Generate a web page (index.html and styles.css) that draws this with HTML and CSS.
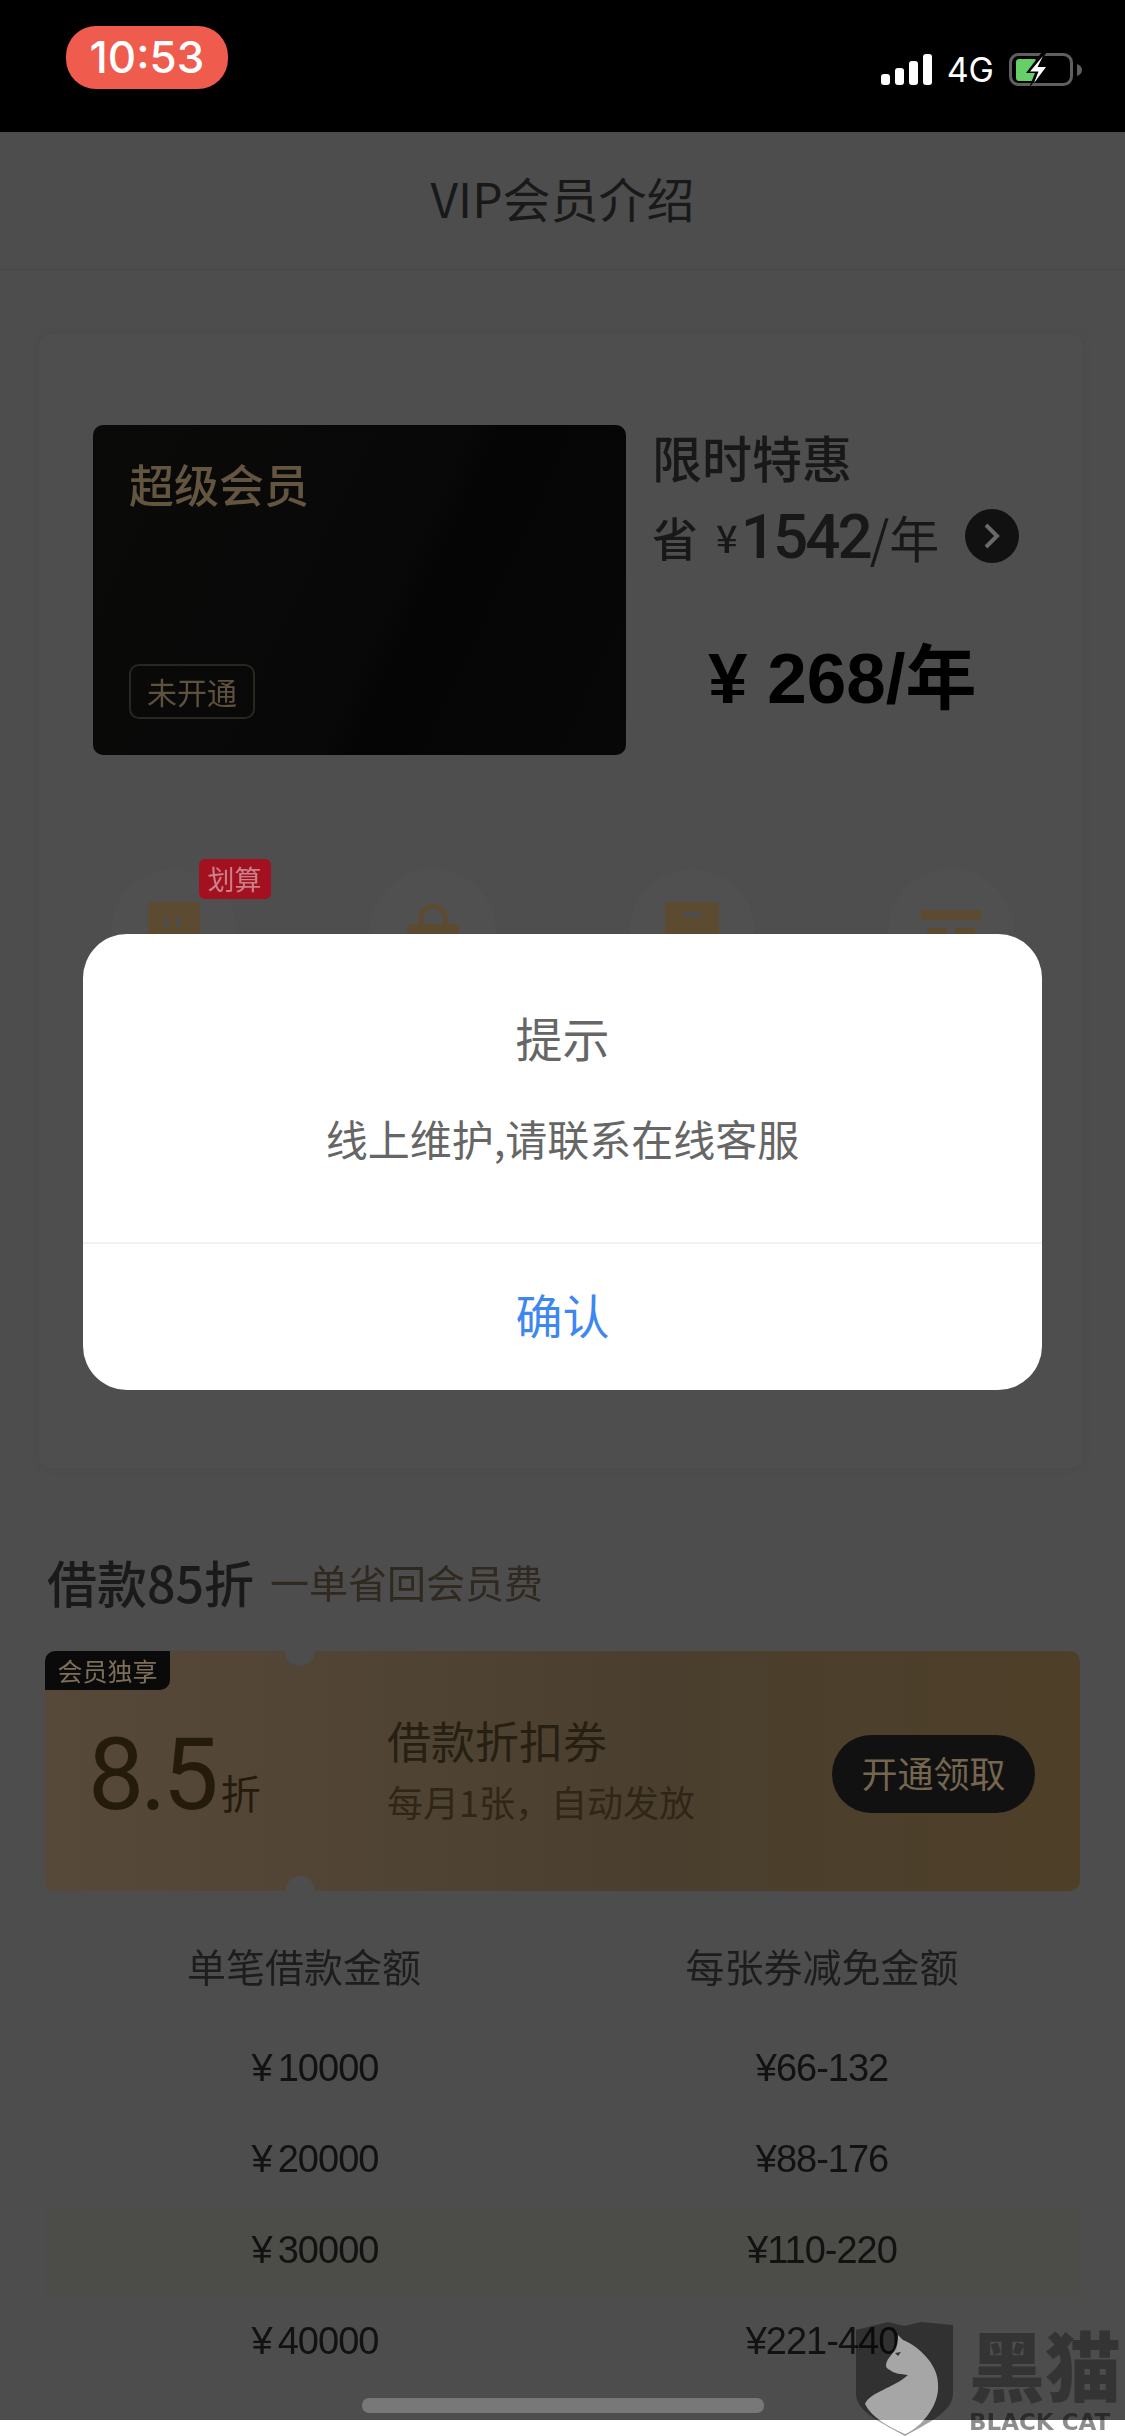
FILE: index.html
```html
<!DOCTYPE html>
<html lang="zh-CN">
<head>
  <meta charset="UTF-8" />
  <meta name="viewport" content="width=device-width, initial-scale=1" />
  <title>VIP会员介绍</title>
  <link rel="stylesheet" href="styles.css">
</head>
<body>
  <div class="phone">
    <div class="status">
      <div class="time">10:53</div>
      <div class="status-right">
        <svg class="signal" width="51" height="31" viewBox="0 0 51 31">
          <rect x="0" y="20" width="9" height="11" rx="3" fill="#fff"/>
          <rect x="14" y="14" width="9" height="17" rx="3" fill="#fff"/>
          <rect x="28" y="7" width="9" height="24" rx="3" fill="#fff"/>
          <rect x="42" y="0" width="9" height="31" rx="3" fill="#fff"/>
        </svg>
        <span class="net">4G</span>
        <svg class="battery" width="73" height="36" viewBox="0 0 73 36">
          <rect x="1.500" y="2.500" width="61" height="30" rx="8" fill="none" stroke="#5f5f5f" stroke-width="3"/>
          <rect x="7" y="7" width="21" height="22" rx="3" fill="#66cf67"/>
          <path d="M68 12c3 1 5 3 5 6s-2 5-5 6z" fill="#5f5f5f"/>
          <path d="M33 0L17 21h9l-6 15 18-23h-9l9-13z" fill="#000"/>
          <path d="M34 4L21 19.500h8.500L25 31l12-16h-8.500z" fill="#fff"/>
        </svg>
      </div>
    </div>

    <div class="page">
      <div class="nav">VIP会员介绍</div>

      <div class="vip-card">
        <div class="hero">
          <div class="black-card soft">
            <div class="black-card-title">超级会员</div>
            <div class="black-card-tag">未开通</div>
          </div>
          <div class="offer">
            <div class="offer-title soft">限时特惠</div>
            <div class="offer-save soft">
              <span>省</span>
              <span class="yen">¥</span>
              <span class="save-num">1542</span>
              <span class="per">/年</span>
              <span class="go">
                <svg width="20" height="28" viewBox="0 0 20 28"><path d="M4 3l11 11L4 25" fill="none" stroke="#6a6a6a" stroke-width="4"/></svg>
              </span>
            </div>
            <div class="offer-price">¥ 268/年</div>
          </div>
        </div>

        <div class="perks soft">
          <div class="perk">
            <span class="deal">划算</span>
            <svg width="52" height="70" viewBox="0 0 52 70"><rect width="52" height="70" rx="3" fill="#5c4b31"/><rect x="16" y="14" width="4" height="12" fill="#4d4d4d"/><rect x="28" y="14" width="4" height="12" fill="#4d4d4d"/></svg>
          </div>
          <div class="perk">
            <svg width="52" height="70" viewBox="0 0 52 70"><path d="M14 24v-8a12 12 0 0 1 24 0v8" fill="none" stroke="#5c4b31" stroke-width="5"/><rect y="22" width="52" height="48" rx="4" fill="#5c4b31"/></svg>
          </div>
          <div class="perk">
            <svg width="54" height="70" viewBox="0 0 54 70"><rect width="54" height="70" rx="3" fill="#5c4b31"/><rect x="18" y="10" width="18" height="5" rx="2" fill="#4d4d4d"/></svg>
          </div>
          <div class="perk">
            <svg class="perk-low" width="60" height="60" viewBox="0 0 60 60"><rect width="60" height="10" fill="#5c4b31"/><rect x="6" y="18" width="20" height="8" fill="#5c4b31"/><rect x="34" y="18" width="20" height="8" fill="#5c4b31"/><rect x="6" y="34" width="48" height="26" fill="#5c4b31"/></svg>
          </div>
        </div>
      </div>

      <div class="loan-head soft">
        <span class="loan-title">借款85折</span>
        <span class="loan-sub">一单省回会员费</span>
      </div>

      <div class="ticket soft">
        <span class="ticket-tag">会员独享</span>
        <div class="ticket-rate">
          <span class="rate-num">8.5</span>
          <span class="rate-unit">折</span>
        </div>
        <div class="ticket-info">
          <div class="ticket-name">借款折扣券</div>
          <div class="ticket-note">每月1张，自动发放</div>
        </div>
        <div class="ticket-btn">开通领取</div>
      </div>

      <div class="rates soft">
        <div class="rates-head">单笔借款金额</div>
        <div class="rates-head">每张券减免金额</div>
        <div class="rates-cell amount"><span class="amount-yen">¥</span>10000</div>
        <div class="rates-cell">¥66-132</div>
        <div class="rates-cell amount"><span class="amount-yen">¥</span>20000</div>
        <div class="rates-cell">¥88-176</div>
        <div class="rates-cell amount band"><span class="amount-yen">¥</span>30000</div>
        <div class="rates-cell band">¥110-220</div>
        <div class="rates-cell amount"><span class="amount-yen">¥</span>40000</div>
        <div class="rates-cell">¥221-440</div>
      </div>
    </div>

    <div class="home-bar"></div>

    <div class="modal">
      <div class="modal-body">
        <div class="modal-title">提示</div>
        <div class="modal-text">线上维护,请联系在线客服</div>
      </div>
      <div class="modal-ok">确认</div>
    </div>

    <div class="watermark">
      <svg class="shield" width="97" height="114" viewBox="0 0 97 114">
        <path fill-rule="evenodd" fill="rgba(0,0,0,.36)" d="M0 8L32 0 48 4 65 0 97 3V72C97 90 70 102 49 114 28 102 0 90 0 72Z M42 13L47 18C62 24 82 42 82 62 84 84 64 106 49 112 32 104 16 96 9 82 14 70 38 66 52 53 46 52 38 52 34 48 28 46 29 40 36 32 39 28 42 24 42 13Z"/>
        <path fill="rgba(255,255,255,.5)" d="M42 13L47 18C62 24 82 42 82 62 84 84 64 106 49 112 32 104 16 96 9 82 14 70 38 66 52 53 46 52 38 52 34 48 28 46 29 40 36 32 39 28 42 24 42 13Z"/>
        <path fill="#333" d="M39 31l6-1-3 4z"/>
      </svg>
      <div class="mark-text">
        <div class="mark-cn">黑猫</div>
        <div class="mark-en">BLACK CAT</div>
      </div>
    </div>
  </div>
</body>
</html>
```

FILE: styles.css
```css
* {
  box-sizing: border-box;
}
body {
  margin: 0;
  background: #fff;
  font-family: "Noto Sans CJK SC", "Noto Sans", sans-serif;
}
.phone {
  position: relative;
  width: 1125px;
  height: 2436px;
  overflow: hidden;
}
.soft {
  filter: blur(0.7px);
}

/* status bar */
.status {
  height: 132px;
  background: #000;
  display: flex;
  justify-content: space-between;
  align-items: flex-start;
  padding: 26px 43px 0 66px;
}
.time {
  width: 162px;
  height: 63px;
  border-radius: 30px;
  background: #ef5b4c;
  color: #fff;
  font-family: Inter, sans-serif;
  font-size: 44px;
  font-weight: 500;
  line-height: 63px;
  text-align: center;
}
.status-right {
  display: flex;
  align-items: center;
  margin-top: 27px;
  height: 33px;
}
.net {
  margin-left: 15px;
  margin-right: 15px;
  color: #fff;
  font-family: Inter, sans-serif;
  font-size: 34px;
  line-height: 33px;
}

/* page behind the dialog */
.page {
  height: 2288px;
  background: #4d4d4d;
}
.nav {
  height: 138px;
  border-bottom: 1px solid #464646;
  color: #191919;
  font-size: 48px;
  line-height: 130px;
  text-align: center;
}
.vip-card {
  width: 1044px;
  height: 1134px;
  margin: 64px 0 0 39px;
  padding-top: 91px;
  background: #4e4e4e;
  border-radius: 12px;
  box-shadow: 0 0 6px #4a4a4a;
}
.hero {
  display: flex;
  padding-left: 54px;
}
.black-card {
  width: 533px;
  height: 330px;
  padding: 29px 0 36px 36px;
  display: flex;
  flex-direction: column;
  align-items: flex-start;
  justify-content: space-between;
  background: linear-gradient(115deg, #0a0a09, #080808 55%, #050505 60%, #070707);
  border-radius: 10px;
}
.black-card-title {
  color: #645540;
  font-size: 45px;
  font-weight: 500;
  line-height: 60px;
}
.black-card-tag {
  width: 126px;
  height: 55px;
  border: 2px solid #2a2620;
  border-radius: 10px;
  color: #5f513e;
  font-size: 30px;
  line-height: 50px;
  text-align: center;
}
.offer {
  margin: -3px 0 0 26px;
  flex: 1;
}
.offer-title {
  color: #181818;
  font-size: 50px;
  font-weight: 500;
  line-height: 68px;
}
.offer-save {
  height: 92px;
  display: flex;
  align-items: center;
  color: #181818;
  font-size: 46px;
  font-weight: 500;
}
.yen {
  margin-left: 18px;
  font-size: 38px;
}
.save-num {
  margin-left: 3px;
  font-family: Roboto, sans-serif;
  font-size: 62px;
  letter-spacing: -3px;
}
.per {
  font-size: 50px;
  font-weight: 400;
}
.go {
  width: 54px;
  height: 54px;
  margin-left: 26px;
  display: flex;
  align-items: center;
  justify-content: center;
  border-radius: 50%;
  background: #111;
}
.offer-price {
  margin: 57px 0 0 56px;
  color: #000;
  font-family: "Liberation Sans", "Noto Sans CJK SC", sans-serif;
  font-size: 71px;
  line-height: 80px;
  font-weight: bold;
}
.perks {
  display: grid;
  grid-template-columns: repeat(4, 259px);
  margin: 114px 0 0 5px;
}
.perk {
  position: relative;
  width: 126px;
  height: 126px;
  margin: 0 auto;
  padding-top: 33px;
  display: flex;
  align-items: flex-start;
  justify-content: center;
  background: #505050;
  border-radius: 50%;
}
.perk-low {
  margin-top: 8px;
}
.deal {
  position: absolute;
  top: -10px;
  left: 88px;
  width: 72px;
  height: 40px;
  border-radius: 6px;
  background: #a3101f;
  color: #c9828a;
  font-size: 27px;
  line-height: 40px;
  text-align: center;
}

/* loan section */
.loan-head {
  display: flex;
  align-items: center;
  height: 60px;
  margin-top: 83px;
  padding-left: 47px;
}
.loan-title {
  color: #1a1a1a;
  font-size: 50px;
  font-weight: 500;
}
.loan-sub {
  margin-left: 16px;
  color: #302920;
  font-size: 39px;
}
.ticket {
  position: relative;
  width: 1035px;
  height: 240px;
  margin: 40px 0 0 45px;
  display: flex;
  align-items: center;
  background: linear-gradient(90deg, #57493a, #4a3f2e 60%, #4e3f28);
  border-radius: 10px;
}
.ticket::before,
.ticket::after {
  content: "";
  position: absolute;
  left: 240px;
  width: 30px;
  height: 30px;
  background: #4d4d4d;
  border-radius: 50%;
}
.ticket::before {
  top: -15px;
}
.ticket::after {
  bottom: -15px;
}
.ticket-tag {
  position: absolute;
  top: 0;
  left: 0;
  width: 125px;
  height: 39px;
  background: #0a0a0a;
  border-radius: 10px 0 10px 0;
  color: #7d6e59;
  font-size: 25px;
  line-height: 39px;
  text-align: center;
}
.ticket-rate {
  width: 342px;
  padding: 6px 0 0 43px;
  display: flex;
  align-items: baseline;
  color: #241b0b;
}
.rate-num {
  font-family: Roboto, sans-serif;
  font-size: 100px;
  letter-spacing: -4px;
}
.rate-unit {
  margin-left: 6px;
  font-size: 40px;
}
.ticket-info {
  flex: 1;
  margin-top: -4px;
}
.ticket-name {
  color: #271f11;
  font-size: 44px;
  line-height: 56px;
}
.ticket-note {
  margin-top: 8px;
  color: #2f2616;
  font-size: 36px;
  line-height: 50px;
}
.ticket-btn {
  width: 203px;
  height: 78px;
  margin: 6px 45px 0 0;
  background: #111;
  border-radius: 39px;
  color: #75664f;
  font-size: 36px;
  line-height: 74px;
  text-align: center;
}

/* rate table */
.rates {
  width: 1036px;
  margin-left: 45px;
  display: grid;
  grid-template-columns: 1fr 1fr;
}
.rates-head {
  height: 134px;
  padding-top: 37px;
  color: #1d1d1d;
  font-size: 39px;
  line-height: 74px;
  text-align: center;
}
.rates-cell {
  height: 91px;
  color: #121212;
  font-family: "Liberation Sans", sans-serif;
  font-size: 38px;
  letter-spacing: -1px;
  line-height: 87px;
  text-align: center;
}
.amount {
  padding-left: 22px;
}
.amount-yen {
  margin-right: 6px;
}
.band {
  background: #4c4c49;
}

/* things lying over the page */
.home-bar {
  position: absolute;
  top: 2398px;
  left: 362px;
  width: 402px;
  height: 15px;
  background: #787878;
  border-radius: 7px;
}
.modal {
  position: absolute;
  top: 934px;
  left: 83px;
  width: 959px;
  height: 456px;
  display: flex;
  flex-direction: column;
  background: #fff;
  border-radius: 44px;
  text-align: center;
}
.modal-body {
  flex: 1;
  padding-top: 73px;
  border-bottom: 2px solid #f1f0f5;
}
.modal-title {
  color: #666;
  font-size: 47px;
  line-height: 60px;
}
.modal-text {
  margin-top: 41px;
  color: #666;
  font-size: 42px;
  line-height: 60px;
}
.modal-ok {
  height: 146px;
  color: #3f87f0;
  font-size: 47px;
  line-height: 140px;
}
.watermark {
  position: absolute;
  top: 2322px;
  left: 856px;
  width: 269px;
  display: flex;
}
.shield {
  flex-shrink: 0;
}
.mark-text {
  margin-left: 16px;
}
.mark-cn {
  height: 88px;
  color: rgba(0, 0, 0, 0.32);
  font-size: 76px;
  font-weight: 900;
  line-height: 82px;
  white-space: nowrap;
}
.mark-en {
  color: rgba(0, 0, 0, 0.45);
  font-family: "DejaVu Sans", sans-serif;
  font-size: 23px;
  font-weight: bold;
  line-height: 24px;
  white-space: nowrap;
}
```
